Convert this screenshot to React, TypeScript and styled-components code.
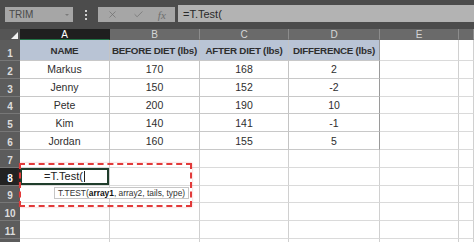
import React from "react";
import styled, { createGlobalStyle } from "styled-components";
import { X, Check } from "lucide-react";

const GlobalStyle = createGlobalStyle`
    html, body {
        margin: 0;
        padding: 0;
        background: #fff;
    }
    body {
        font-family: "Liberation Sans", Arial, sans-serif;
    }
`

const Window = styled.div`
    width: 474px;
    height: 242px;
    overflow: hidden;
    background: #fff;
    display: flex;
    flex-direction: column;
`

const FormulaBar = styled.div`
    height: 29px;
    flex-shrink: 0;
    background: #4c4c4c;
    display: flex;
    align-items: flex-start;
    padding: 7px 0 0 5px;
    box-sizing: border-box;
`

const NameBox = styled.div`
    width: 68px;
    height: 15px;
    background: #a6a6a6;
    display: flex;
    align-items: center;
    justify-content: space-between;
    padding: 0 4px 0 4px;
    box-sizing: border-box;
    font-size: 10px;
    color: #4a4a4a;
`

const DropArrow = styled.span`
    width: 0;
    height: 0;
    border-left: 2px solid transparent;
    border-right: 2px solid transparent;
    border-top: 2px solid #7a7a7a;
`

const Grip = styled.div`
    width: 25px;
    height: 15px;
    display: flex;
    flex-direction: column;
    align-items: center;
    justify-content: center;
    gap: 2px;

    span {
        width: 2px;
        height: 2px;
        background: #d0d0d0;
    }
`

const Buttons = styled.div`
    width: 77px;
    height: 15px;
    background: #a6a6a6;
    display: flex;
    align-items: center;
    justify-content: space-around;
    padding: 0 2px;
    box-sizing: border-box;
    color: #6e6e6e;
`

const Fx = styled.span`
    font-family: "Liberation Serif", "Times New Roman", serif;
    font-style: italic;
    font-size: 11px;
    color: #6e6e6e;
`

const FormulaInput = styled.div`
    flex: 1;
    height: 17px;
    margin: -2px 0 0 3px;
    background: #b3b3b3;
    font-size: 11px;
    color: #2a2a2a;
    display: flex;
    align-items: center;
    padding-left: 5px;
`

const Sheet = styled.div`
    position: relative;
    display: grid;
    grid-template-columns: 20px 90px 90px 89px 91px 79px 15px;
    grid-template-rows: 11px 21px repeat(11, 17.8px);
`

const ColHead = styled.div<{ $active?: boolean }>`
    background: ${p => (p.$active ? "#1f1f1f" : "#6a6a6a")};
    color: ${p => (p.$active ? "#fff" : "#d6d6d6")};
    border-right: 1px solid ${p => (p.$active ? "#1f1f1f" : "#8c8c8c")};
    border-bottom: 1px solid ${p => (p.$active ? "#217346" : "#6a6a6a")};
    font-size: 10px;
    display: flex;
    align-items: center;
    justify-content: center;
    box-sizing: border-box;
`

const Corner = styled.div`
    background: #555;
    position: relative;

    &::after {
        content: "";
        position: absolute;
        right: 2px;
        bottom: 1px;
        border-left: 7px solid transparent;
        border-bottom: 7px solid #f2f2f2;
    }
`

const RowHead = styled.div<{ $active?: boolean }>`
    background: ${p => (p.$active ? "#222" : "#5c5c5c")};
    color: ${p => (p.$active ? "#fff" : "#dcdcdc")};
    border-bottom: 1px solid #777;
    font-size: 10px;
    font-weight: bold;
    display: flex;
    align-items: flex-end;
    justify-content: center;
    padding-bottom: 1px;
    box-sizing: border-box;
`

const Cell = styled.div<{ $kind?: "head" | "data" | "empty"; $edge?: boolean }>`
    background: ${p => (p.$kind === "head" ? "#b9c4d5" : "#fff")};
    color: #2e2e2e;
    font-size: ${p => (p.$kind === "head" ? "9.8px" : "10.5px")};
    letter-spacing: ${p => (p.$kind === "head" ? "-0.25px" : "0")};
    font-weight: ${p => (p.$kind === "head" ? "bold" : "normal")};
    border-right: 1px solid ${p => (p.$edge ? "#9a9a9a" : p.$kind === "empty" ? "#d0d0d0" : "#c4c4c4")};
    border-bottom: 1px solid ${p => (p.$kind === "empty" ? "#dadada" : "#c8c8c8")};
    display: flex;
    align-items: center;
    justify-content: center;
    box-sizing: border-box;
    white-space: nowrap;
`

const EditCell = styled(Cell)`
    box-shadow: inset 0 0 0 2px #1f3d2b;
    color: #222;
    font-size: 11px;
    position: relative;
`

const Caret = styled.span`
    display: inline-block;
    width: 1px;
    height: 11px;
    background: #222;
    margin-left: 1px;
`

const Highlight = styled.div`
    position: absolute;
    left: 19px;
    top: 134px;
    width: 173px;
    height: 44px;
    border: 2px dashed #e23a3a;
    box-sizing: border-box;
    box-shadow: 0 0 2px rgba(220, 40, 40, 0.35);
    pointer-events: none;
`

const Tip = styled.div`
    position: absolute;
    left: 54px;
    top: 158px;
    height: 12px;
    box-sizing: border-box;
    padding: 0 3px;
    background: #fff;
    border: 1px solid #c6c6c6;
    font-size: 8.4px;
    color: #333;
    display: flex;
    align-items: center;
    white-space: nowrap;

    b {
        color: #111;
    }
`

const columns = ["A", "B", "C", "D", "E", ""]

const header = ["NAME", "BEFORE DIET (lbs)", "AFTER DIET (lbs)", "DIFFERENCE (lbs)"]

const data = [
    ["Markus", "170", "168", "2"],
    ["Jenny", "150", "152", "-2"],
    ["Pete", "200", "190", "10"],
    ["Kim", "140", "141", "-1"],
    ["Jordan", "160", "155", "5"],
]

export default function App() {
    const rows: React.ReactNode[] = []

    rows.push(
        <React.Fragment key="r1">
            <RowHead>1</RowHead>
            {header.map((h, i) => (
                <Cell key={h} $kind="head" $edge={i === 3}>{h}</Cell>
            ))}
            <Cell $kind="empty" />
            <Cell $kind="empty" />
        </React.Fragment>
    )

    data.forEach((r, idx) => {
        rows.push(
            <React.Fragment key={"r" + (idx + 2)}>
                <RowHead>{idx + 2}</RowHead>
                {r.map((v, i) => (
                    <Cell key={i} $kind="data" $edge={i === 3}>{v}</Cell>
                ))}
                <Cell $kind="empty" />
                <Cell $kind="empty" />
            </React.Fragment>
        )
    })

    for (let n = 7; n <= 11; n++) {
        rows.push(
            <React.Fragment key={"r" + n}>
                <RowHead $active={n === 8}>{n}</RowHead>
                {n === 8 ? (
                    <EditCell $kind="empty">=T.Test(<Caret /></EditCell>
                ) : (
                    <Cell $kind="empty" />
                )}
                {[1, 2, 3, 4, 5].map(i => <Cell key={i} $kind="empty" />)}
            </React.Fragment>
        )
    }

    // only a sliver of row 12 is visible at the bottom edge
    rows.push(
        <React.Fragment key="r12">
            <RowHead />
            {[0, 1, 2, 3, 4, 5].map(i => <Cell key={i} $kind="empty" />)}
        </React.Fragment>
    )

    return (
        <>
            <GlobalStyle />
            <Window>
                <FormulaBar>
                    <NameBox>
                        TRIM
                        <DropArrow />
                    </NameBox>
                    <Grip><span /><span /><span /></Grip>
                    <Buttons>
                        <X size={11} strokeWidth={1.5} />
                        <Check size={11} strokeWidth={1.5} />
                        <Fx>fx</Fx>
                    </Buttons>
                    <FormulaInput>=T.Test(</FormulaInput>
                </FormulaBar>
                <Sheet>
                    <Corner />
                    {columns.map((c, i) => (
                        <ColHead key={i} $active={c === "A"}>{c}</ColHead>
                    ))}
                    {rows}
                    <Highlight />
                    <Tip>T.TEST(<b>array1</b>, array2, tails, type)</Tip>
                </Sheet>
            </Window>
        </>
    )
}
